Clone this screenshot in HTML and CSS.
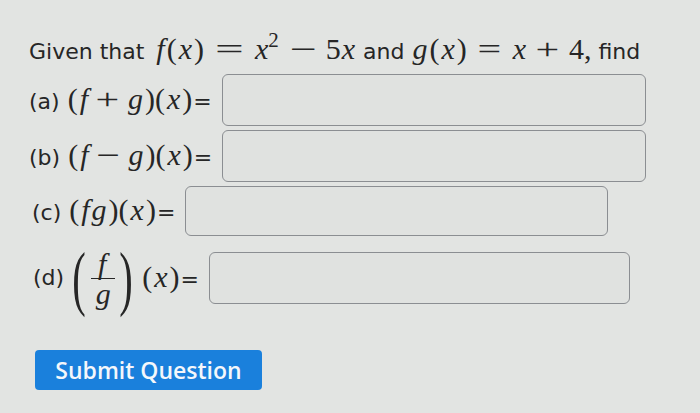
FILE: index.html
```html
<!DOCTYPE html>
<html>
<head>
<meta charset="utf-8">
<link rel="stylesheet" href="styles.css">
</head>
<body>
<div class="page">
  <p class="intro">Given that <span class="m m1"><i>f</i><span class="p">(</span><i>x</i><span class="p">)</span><span class="rel rel1">=</span><i>x</i><sup>2</sup><span class="bin bin1">−</span>5<i>x</i></span> and <span class="m"><i>g</i><span class="p">(</span><i>x</i><span class="p">)</span><span class="rel rel2">=</span><i>x</i><span class="bin bin2">+</span>4,</span> find</p>
  <div class="row ra">
    <span class="lbl">(a) <span class="m"><span class="p">(</span><i>f</i><span class="bin">+</span><i>g</i><span class="p">)(</span><i>x</i><span class="p">)</span></span>=</span>
    <div class="box"></div>
  </div>
  <div class="row rb">
    <span class="lbl">(b) <span class="m"><span class="p">(</span><i>f</i><span class="bin">−</span><i>g</i><span class="p">)(</span><i>x</i><span class="p">)</span></span>=</span>
    <div class="box"></div>
  </div>
  <div class="row rc">
    <span class="lbl">(c) <span class="m"><span class="p">(</span><i>f</i><i>g</i><span class="p">)(</span><i>x</i><span class="p">)</span></span>=</span>
    <div class="box"></div>
  </div>
  <div class="row rd">
    <span class="lbl lbl-d"><span class="t">(d)</span><span class="m bigp">(</span><span class="m frac"><i class="num">f</i><span class="bar"></span><i class="den">g</i></span><span class="m bigp">)</span><span class="t"><span class="m"><span class="p">(</span><i>x</i><span class="p">)</span></span>=</span></span>
    <div class="box"></div>
  </div>
  <button class="submit">Submit Question</button>
</div>
</body>
</html>
```
FILE: styles.css
```css
html, body {
  margin: 0;
  padding: 0;
  background: #e2e4e2;
}
.page {
  width: 700px;
  height: 413px;
  box-sizing: border-box;
  padding: 34px 0 0 29px;
  font-family: "DejaVu Sans", Verdana, sans-serif;
  font-size: 22px;
  color: #262626;
}
.intro {
  margin: 0;
  line-height: 36px;
  white-space: nowrap;
}
.m {
  font-family: "Liberation Serif", "Times New Roman", serif;
  font-size: 30px;
  line-height: 30px;
}
.m i {
  font-style: italic;
  padding: 0 1px;
}
.m1 {
  margin-left: 4px;
}
.p {
  margin: 0 1px;
}
.m sup {
  font-size: 21px;
  vertical-align: 12px;
  line-height: 0;
  margin: 0 2px 0 -1px;
}
.rel {
  display: inline-block;
  transform: scaleX(1.4);
  margin: 0 12px;
}
.rel1 {
  transform: scaleX(1.7);
  margin: 0 16px;
}
.rel2 {
  margin: 0 13.5px;
}
.bin {
  display: inline-block;
  transform: scaleX(1.4);
  margin: 0 10.5px;
}
.bin1 {
  transform: scaleX(1.6);
  margin: 0 14px;
}
.bin2 {
  margin: 0 12.5px;
}
.row {
  display: flex;
  align-items: center;
  gap: 10px;
  white-space: nowrap;
}
.lbl {
  line-height: 30px;
}
.box {
  width: 422px;
  height: 50px;
  border: 1.5px solid #8b8e92;
  border-radius: 6px;
  background: #e0e2e0;
  flex: none;
}
.ra { margin-top: 4px; }
.rb { margin-top: 4px; }
.rc { margin-top: 4px; margin-left: 3px; }
.rc .box { height: 48px; width: 421px; }
.rd { margin-top: 8px; height: 68px; margin-left: 4px; gap: 10px; }
.rd .box { width: 419px; }
.lbl-d {
  display: inline-flex;
  align-items: center;
}
.bigp {
  display: inline-block;
  transform: scale(1.35, 2.4);
  margin: 0 7px 0 10px;
}
.frac + .bigp {
  margin: 0 10px 0 6px;
}
.frac {
  display: inline-flex;
  flex-direction: column;
  align-items: center;
  line-height: 26px;
  margin-top: 2px;
}
.frac .num {
  padding: 0 2px 0 0;
}
.frac .den {
  padding: 0;
}
.bar {
  width: 24px;
  height: 1.6px;
  background: #262626;
  margin: 1px 0 2px;
}
.submit {
  display: block;
  margin-top: 38px;
  margin-left: 6px;
  width: 227px;
  height: 40px;
  border: none;
  border-radius: 4px;
  background: #1a80dc;
  color: #f4f7fb;
  font-family: "Open Sans", sans-serif;
  font-weight: 600;
  font-size: 23px;
  padding: 0;
}
```
